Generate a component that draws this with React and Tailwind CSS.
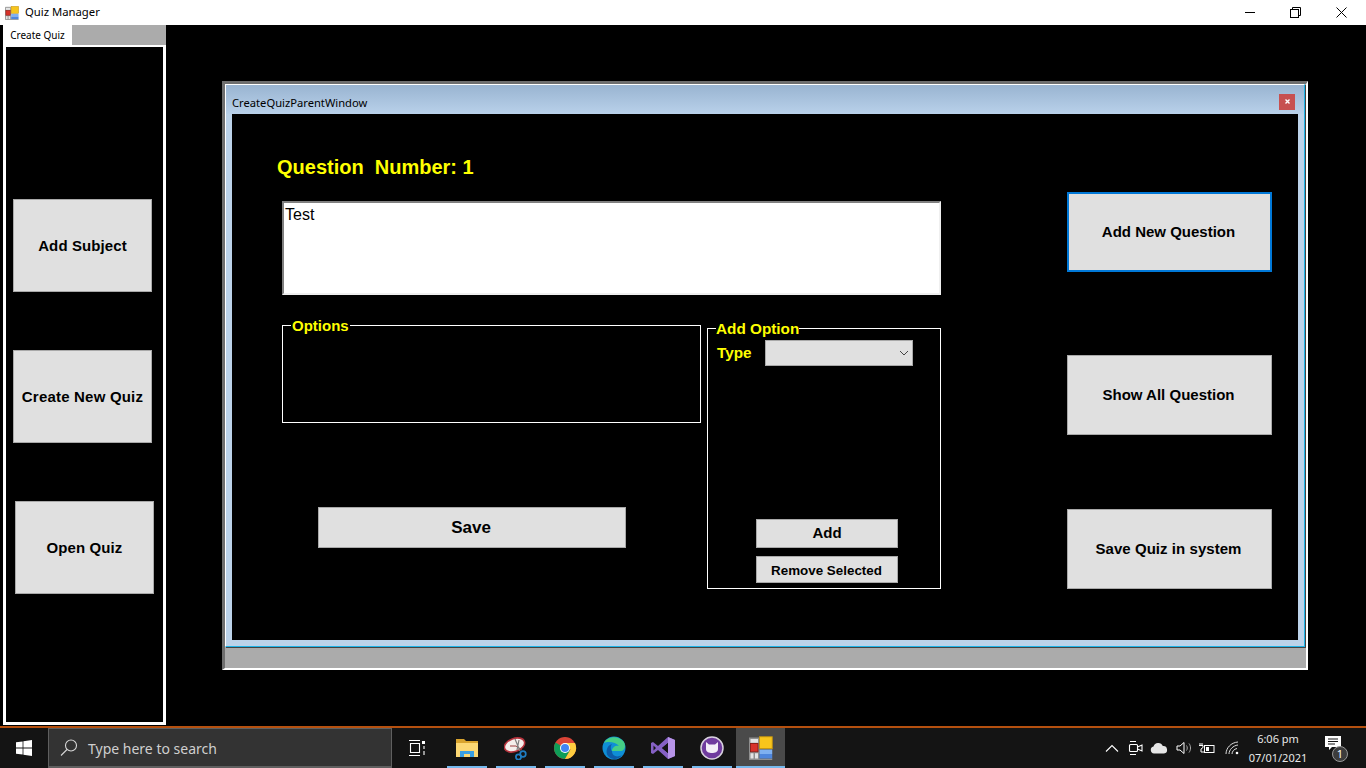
const arial = "font-['Liberation_Sans',Arial,sans-serif]";
const segoe = "font-['Noto_Sans','Open_Sans',sans-serif]";

function AppIcon({ size = 16 }) {
  return (
    <svg width={size} height={size} viewBox="0 0 16 16">
      <path d="M0.5 1.5H6.5V15.5H0.5ZM0.5 5H6.5M0.5 11H6.5M3.5 11V15.5M6.5 15.5H15.5" fill="#e4e4e4" stroke="#8f8f8f" />
      <rect x="1" y="5" width="5" height="5.5" fill="#d8322a" stroke="#8a1a14" strokeWidth="0.6" />
      <rect x="7" y="0.5" width="8.5" height="8" fill="#f7c51c" stroke="#c2920f" strokeWidth="0.6" />
      <rect x="7" y="9" width="8.5" height="3" fill="#7fb0f0" />
      <rect x="7" y="12" width="8.5" height="3" fill="#4f86dc" />
    </svg>
  );
}

function WinControls() {
  return (
    <div className="flex items-center h-full mr-[2px]">
      <div className="w-[45.5px] flex justify-center">
        <div className="w-[10px] h-px bg-black" />
      </div>
      <div className="w-[45.5px] flex justify-center">
        <svg width="11" height="11" viewBox="0 0 11 11" fill="none" stroke="#000">
          <rect x="0.5" y="2.5" width="8" height="8" fill="#fff" />
          <path d="M2.5 2.5V0.5H10.5V8.5H8.5" />
        </svg>
      </div>
      <div className="w-[45.5px] flex justify-center">
        <svg width="11" height="11" viewBox="0 0 11 11" stroke="#000" fill="none">
          <path d="M0.5 0.5L10.5 10.5M10.5 0.5L0.5 10.5" />
        </svg>
      </div>
    </div>
  );
}

function GrayButton({ className = "", children }) {
  return (
    <button className={`bg-[#e0e0e0] border border-[#a9a9a9] text-black font-bold ${arial} ${className}`}>
      {children}
    </button>
  );
}

function Sidebar() {
  return (
    <div className="w-[166px] shrink-0 h-full flex flex-col pl-[3px] bg-black">
      <div className="flex h-[20px] bg-[#ababab] shrink-0">
        <div className={`w-[69px] bg-white text-[10px] leading-[20px] text-center text-black ${segoe}`}>
          Create Quiz
        </div>
      </div>
      <div className="flex-1 border-x-[3px] border-t-2 border-b-[3px] border-white bg-black pl-[7px] pt-[152px] mb-[1px]">
        <GrayButton className="w-[139px] h-[93px] text-[15px] pt-[2px] tracking-[0.1px] block">Add Subject</GrayButton>
        <GrayButton className="w-[139px] h-[93px] text-[15px] pt-[2px] tracking-[0.2px] block mt-[58px]">Create New Quiz</GrayButton>
        <GrayButton className="w-[139px] h-[93px] text-[15px] pt-[2px] tracking-[0.1px] block mt-[58px] ml-[2px]">Open Quiz</GrayButton>
      </div>
    </div>
  );
}

function QuizForm() {
  return (
    <div className="flex-1 bg-black flex pl-[45px]">
      <div className="w-[664px] shrink-0">
        <h1 className={`mt-[41px] text-[20px] leading-[24px] font-bold text-[#ffff00] whitespace-pre ${arial}`}>
          Question  Number: 1
        </h1>
        <div className="ml-[5px] mt-[22px] h-[94px] bg-white border-2 border-t-[#808080] border-l-[#808080] border-r-[#f0f0f0] border-b-[#f0f0f0] px-[1px] py-[3px]">
          <p className={`text-[16px] leading-[18px] text-black ${arial}`}>Test</p>
        </div>
        <div className="flex ml-[5px] mt-[21px] items-start">
          <div className="w-[425px] shrink-0">
            <fieldset className="w-[419px] h-[107px] border border-white px-[8px]">
              <legend className={`text-[15px] leading-[19px] font-bold text-[#ffff00] px-[1px] ${arial}`}>Options</legend>
            </fieldset>
            <GrayButton className="w-[308px] h-[41px] text-[17px] pr-[2px] ml-[36px] mt-[84px] block">Save</GrayButton>
          </div>
          <fieldset className="w-[234px] h-[270px] mt-[3px] border border-white px-[8px]">
            <legend className={`text-[15.3px] leading-[19px] font-bold text-[#ffff00] ${arial}`}>Add Option</legend>
            <div className="flex items-center mt-[2px]">
              <span className={`w-[49px] pl-[1px] pb-[2px] text-[15.3px] leading-[17px] font-bold text-[#ffff00] ${arial}`}>Type</span>
              <div className="w-[148px] h-[26px] bg-[#e0e0e0] border border-[#a9a9a9] flex items-center justify-end pr-[2px]">
                <svg width="12" height="12" viewBox="0 0 12 12" fill="none" stroke="#444" strokeWidth="1">
                  <path d="M2 4L6 8L10 4" />
                </svg>
              </div>
            </div>
            <GrayButton className="w-[142px] h-[29px] text-[15px] ml-[40px] mt-[153px] block">Add</GrayButton>
            <GrayButton className="w-[142px] h-[27px] text-[13.4px] pt-[3px] pr-[1px] ml-[40px] mt-[8px] block">Remove Selected</GrayButton>
          </fieldset>
        </div>
      </div>
      <div className="ml-[126px] w-[205px] shrink-0 pt-[78px]">
        <button className={`w-[205px] h-[80px] bg-[#e0e0e0] border-2 border-[#0078d7] text-[15px] pr-[2px] font-bold text-black block ${arial}`}>
          Add New Question
        </button>
        <GrayButton className="w-[205px] h-[80px] text-[15px] pr-[2px] block mt-[83px]">Show All Question</GrayButton>
        <GrayButton className="w-[205px] h-[80px] text-[15px] pr-[2px] tracking-[0.05px] block mt-[74px]">Save Quiz in system</GrayButton>
      </div>
    </div>
  );
}

function ChildWindow() {
  return (
    <div className="w-[1080px] h-[563px] flex flex-col border-t border-l border-white border-r border-b border-r-[#1fb4e8] border-b-[#1fb4e8] bg-[#bcd3ea] shadow-[1px_1px_0_#444444]">
      <div className="h-[29px] shrink-0 bg-gradient-to-b from-[#99b4d1] to-[#b9d1ea] flex items-center justify-between pl-[6px] pr-[9px]">
        <span className={`text-[11.2px] text-black pt-[7px] ${segoe}`}>CreateQuizParentWindow</span>
        <div className="w-4 h-4 bg-[#c75050] flex items-center justify-center mt-[4px]">
          <svg width="5" height="5" viewBox="0 0 5 5" stroke="#fff" strokeWidth="1.4">
            <path d="M0.5 0.5L4.5 4.5M4.5 0.5L0.5 4.5" />
          </svg>
        </div>
      </div>
      <div className="flex-1 flex mx-[6px] mb-[6px] min-h-0">
        <QuizForm />
      </div>
    </div>
  );
}

function Desktop() {
  return (
    <div className="flex-1 bg-black pl-[56px] pt-[56px]">
      <div className="w-[1086px] h-[589px] bg-[#ababab] border-t-[3px] border-l-[3px] border-t-[#6e6e6e] border-l-[#6e6e6e] border-r-2 border-b-2 border-r-white border-b-white">
        <ChildWindow />
      </div>
    </div>
  );
}

function Slot({ active, children }) {
  return (
    <div className={`w-[49px] h-full relative flex items-center justify-center pb-[1px] ${active ? "bg-[#4a4a4a]" : ""}`}>
      {children}
      <div className={`absolute bottom-0 h-[2px] bg-[#76b9ed] ${active ? "left-0 right-0" : "left-[5px] right-[4px]"}`} />
    </div>
  );
}

const taskIcons = [
  <svg key="folder" width="22" height="20" viewBox="0 0 22 20">
    <path d="M0 1H8L10 3H22V19H0Z" fill="#d9a42e" />
    <rect y="5" width="22" height="14" fill="#fcd874" />
    <path d="M4 19V13H18V19H14V16H8V19Z" fill="#3a9fe3" />
  </svg>,
  <svg key="snip" width="24" height="24" viewBox="0 0 24 24">
    <ellipse cx="10.5" cy="9" rx="10.5" ry="6.5" fill="#f5efec" stroke="#b5333d" strokeWidth="1.6" transform="rotate(-20 10.5 9)" />
    <path d="M6 10H12L18 14" fill="none" stroke="#9a3a3a" strokeWidth="1" />
    <path d="M11 3L16 15M15 4L13 14" stroke="#7d7d7d" strokeWidth="1.2" />
    <circle cx="19" cy="18" r="2.8" fill="none" stroke="#1f7ec4" strokeWidth="1.7" />
    <circle cx="14.5" cy="21" r="2.6" fill="none" stroke="#1f7ec4" strokeWidth="1.7" />
  </svg>,
  <svg key="chrome" width="24" height="24" viewBox="0 0 24 24">
    <circle cx="12" cy="12" r="11" fill="#db4437" />
    <path d="M12 12L2.5 6.5A11 11 0 0 0 12 23L17.5 13.5Z" fill="#0f9d58" />
    <path d="M12 7H22A11 11 0 0 1 12 23L17.5 13.5Z" fill="#ffcd40" />
    <circle cx="12" cy="12" r="5" fill="#fff" />
    <circle cx="12" cy="12" r="4" fill="#4285f4" />
  </svg>,
  <svg key="edge" width="24" height="24" viewBox="0 0 24 24">
    <circle cx="12" cy="12" r="11.5" fill="#0f8fd6" />
    <path d="M2 7C5 0 17-1 22 6C24 10 23 15 18 15H10C10 11 14 9 17 10C14 6 6 5 2 7Z" fill="#45cf86" />
    <path d="M10 15C10 20 15 22 20 19C17 24 9 24 6 20C3 16 5 9 10 8C8 10 9 15 10 15Z" fill="#0c5ba8" />
  </svg>,
  <svg key="vs" width="24" height="24" viewBox="0 0 24 24">
    <path d="M17 1L24 4V20L17 23L7 14L2 18L0 17V7L2 6L7 10ZM17 7L11 12L17 17ZM2.5 9.5V14.5L5 12Z" fill="#8661c5" />
    <path d="M17 1L24 4V20L17 23Z" fill="#b794e8" />
    <path d="M17 7V17L11 12Z" fill="#141414" />
  </svg>,
  <svg key="cat" width="24" height="24" viewBox="0 0 24 24">
    <circle cx="12" cy="12" r="11" fill="#6f3b9e" stroke="#d8d2de" strokeWidth="1.5" />
    <path d="M6 6L9 8.5H15L18 6V13C18 16 15 17 12 17C9 17 6 16 6 13Z" fill="#f3eef7" />
  </svg>,
];

function Taskbar() {
  return (
    <div className={`h-[40px] bg-[#141414] flex items-stretch text-white ${segoe}`}>
      <div className="w-[48px] flex items-center justify-center">
        <svg width="16" height="16" viewBox="0 0 16 16" fill="#fff">
          <path d="M0 2.3L6.6 1.4V7.6H0ZM7.4 1.3L16 0V7.6H7.4ZM0 8.4H6.6V14.6L0 13.7ZM7.4 8.4H16V16L7.4 14.7Z" />
        </svg>
      </div>
      <div className="w-[344px] bg-[#333333] border border-[#5f5f5f] border-b-2 flex items-center pl-[11px]">
        <svg width="18" height="18" viewBox="0 0 18 18" fill="none" stroke="#d8d8d8" strokeWidth="1.1">
          <circle cx="11" cy="6.5" r="5.5" />
          <path d="M7 10.5L1 16.5" />
        </svg>
        <span className="ml-[10px] pt-[1px] text-[14px] text-[#cfcfcf]">Type here to search</span>
      </div>
      <div className="w-[50px] flex items-center justify-center">
        <svg width="18" height="16" viewBox="0 0 18 16" fill="none" stroke="#fff" strokeWidth="1.1">
          <path d="M1 .5H12M1 15.5H12M2.5 3.5H11.5V12.5H2.5ZM16 6V9M16 11V15" />
          <rect x="14" y="1" width="3" height="3" fill="#fff" stroke="none" />
        </svg>
      </div>
      <div className="flex h-full">
        {taskIcons.map((icon, i) => (
          <Slot key={i}>{icon}</Slot>
        ))}
        <Slot active>
          <AppIcon size={24} />
        </Slot>
      </div>
      <div className="flex-1 flex items-center pl-[320px]">
        <svg width="14" height="8" viewBox="0 0 14 8" fill="none" stroke="#fff" strokeWidth="1.1">
          <path d="M1 7.5L7 1.5L13 7.5" />
        </svg>
        <svg className="ml-[9px]" width="16" height="18" viewBox="0 0 16 18" fill="none" stroke="#fff" strokeWidth="1.1">
          <rect x="1.5" y="5.5" width="8" height="7" rx="1" />
          <path d="M9.5 8L14 6V12L9.5 10M2 2.5H8M2 15.5H8" />
        </svg>
        <svg className="ml-[6px]" width="18" height="12" viewBox="0 0 18 12" fill="#e6e6e6">
          <path d="M4 11.5A3.5 3.5 0 0 1 3.5 4.6A5 5 0 0 1 12.8 4A3.8 3.8 0 0 1 14 11.5Z" />
        </svg>
        <svg className="ml-[8px]" width="16" height="14" viewBox="0 0 16 14" fill="none" stroke="#fff" strokeWidth="1">
          <path d="M1 5H4L8 1.5V12.5L4 9H1Z" />
          <path d="M10.5 4.5C11.5 6 11.5 8 10.5 9.5M13 2.5C15 5 15 9 13 11.5" stroke="#aaa" />
        </svg>
        <svg className="ml-[7px]" width="16" height="12" viewBox="0 0 16 12" fill="none" stroke="#fff" strokeWidth="1">
          <rect x="5.5" y="3.5" width="9.5" height="7" />
          <rect x="7" y="5" width="3" height="4" fill="#fff" stroke="none" />
          <path d="M1 1V3M3 1V3M0 3.5H4V5.5L2 7V10H5" />
        </svg>
        <svg className="ml-[10px]" width="14" height="14" viewBox="0 0 14 14" fill="none" stroke="#ddd" strokeWidth="1">
          <path d="M1 13C1 7 6 1.5 13 1M4 13C4 9 8 4.5 13 4M7 13C7 10.5 9 8 12 7.5" />
          <circle cx="12" cy="12" r="1.3" fill="#fff" stroke="none" />
        </svg>
        <div className="ml-[6px] w-[66px] text-center text-[11px] leading-[19px] text-[#e8e8e8]">
          <div>6:06 pm</div>
          <div>07/01/2021</div>
        </div>
        <div className="relative ml-[14px] w-[22px] h-[24px]">
          <svg width="16" height="15" viewBox="0 0 16 15" fill="#fff">
            <path d="M0 0H16V11H7L4 14V11H0Z" />
            <path d="M3 3H13M3 5.5H13M3 8H10" stroke="#141414" />
          </svg>
          <div className="absolute right-[-1px] bottom-[-2px] w-[16px] h-[16px] rounded-full bg-[#3c3c3c] border border-[#999] text-[11px] leading-[14px] text-center text-white">
            1
          </div>
        </div>
      </div>
    </div>
  );
}

export default function App() {
  return (
    <div className="w-[1366px] h-[768px] flex flex-col overflow-hidden bg-black">
      <div className="h-[25px] bg-white shrink-0 flex items-center justify-between">
        <div className="flex items-center pl-[5px]">
          <AppIcon size={14} />
          <span className={`ml-[6px] text-[11.3px] text-black ${segoe}`}>Quiz Manager</span>
        </div>
        <WinControls />
      </div>
      <div className="h-[701px] flex shrink-0">
        <Sidebar />
        <Desktop />
      </div>
      <div className="h-[2px] bg-[#b5500f] shrink-0" />
      <Taskbar />
    </div>
  );
}
